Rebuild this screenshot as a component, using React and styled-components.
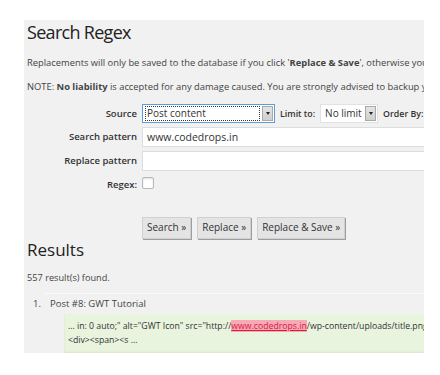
import React from "react";
import styled, { createGlobalStyle } from "styled-components";

const GlobalStyle = createGlobalStyle`
  html, body {
    margin: 0;
    padding: 0;
    background: #fff;
    font-family: "Open Sans", "Liberation Sans", sans-serif;
    color: #333;
  }
`;

const Page = styled.div`
  padding: 20px 16px 0 24px;
`;

const Panel = styled.div`
  width: 400px;
  height: 333px;
  background: #f1f1f1;
  overflow: hidden;
  box-sizing: border-box;
  padding-left: 3px;
  white-space: nowrap;
`;

const Title = styled.h2`
  margin: 0;
  padding-top: 1px;
  font-size: 18px;
  letter-spacing: -0.7px;
  font-weight: 400;
  line-height: 22px;
  color: #222;
`;

const Note = styled.p`
  margin: ${(p) => p.$top}px 0 0;
  font-size: 9.35px;
  line-height: 14px;
  color: #444;
  b {
    font-weight: 700;
  }
`;

const Form = styled.div`
  display: grid;
  grid-template-columns: 110px auto;
  column-gap: 5px;
  row-gap: 4px;
  margin-top: 10px;
`;

const Label = styled.div`
  text-align: right;
  font-size: 9.5px;
  font-weight: 600;
  color: #333;
  line-height: 19px;
`;

const Line = styled.div`
  display: flex;
  align-items: center;
  gap: 5px;
`;

const Inline = styled.span`
  font-size: 8.8px;
  font-weight: 600;
  color: #333;
`;

const Select = styled.div`
  width: ${(p) => p.$w}px;
  height: 19px;
  box-sizing: border-box;
  background: #fff;
  border: 1px solid ${(p) => (p.$focus ? "#5b9dd9" : "#e2e2e2")};
  display: flex;
  align-items: center;
  font-size: 10px;
  color: #333;
  padding-left: 2px;
`;

const Focus = styled.div`
  flex: 1;
  height: 13px;
  line-height: 13px;
  border: 1px dotted #3a3a3a;
  margin-right: 2px;
  padding-left: 1px;
`;

const Plain = styled.div`
  flex: 1;
  line-height: 13px;
  padding-left: 2px;
`;

const Arrow = styled.div`
  width: 11px;
  height: 15px;
  margin-right: 1px;
  background: linear-gradient(#e4e4e4, #cfcfcf);
  border: 1px solid #a9a9a9;
  box-sizing: border-box;
  display: flex;
  align-items: center;
  justify-content: center;
  &::after {
    content: "";
    border-left: 2.5px solid transparent;
    border-right: 2.5px solid transparent;
    border-top: 3px solid #222;
  }
`;

const Input = styled.div`
  width: 300px;
  height: 20px;
  box-sizing: border-box;
  background: #fff;
  border-top: 1px solid #ddd;
  border-bottom: 1px solid #ddd;
  border-left: 1px solid #ddd;
  padding-left: 4px;
  font-size: 10.5px;
  line-height: 18px;
  color: #333;
`;

const Check = styled.div`
  width: 12px;
  height: 12px;
  box-sizing: border-box;
  margin-top: 2px;
  border: 1px solid #b4b9be;
  border-radius: 2px;
  background: #fff;
  box-shadow: inset 0 1px 2px rgba(0, 0, 0, 0.12);
`;

const Buttons = styled.div`
  display: flex;
  gap: 6px;
  margin: 23px 0 0 115px;
`;

const Button = styled.div`
  height: 20px;
  padding: 0 4px;
  background: #e4e4e4;
  border: 1px solid #d0d0d0;
  box-shadow: 1px 1px 0 #9d9d9d;
  font-size: 10px;
  line-height: 19px;
  color: #333;
`;

const Heading = styled.h3`
  margin: 0;
  font-size: 17px;
  font-weight: 400;
  line-height: 22px;
  color: #222;
`;

const Count = styled.p`
  margin: 10px 0 0;
  font-size: 9.2px;
  line-height: 14px;
  color: #444;
`;

const List = styled.ol`
  margin: 8px 0 0;
  padding: 0;
  list-style: none;
  width: 383px;
`;

const Item = styled.li`
  display: grid;
  grid-template-columns: 18px 1fr;
  font-size: 9.5px;
  color: #444;
`;

const Num = styled.span`
  text-align: right;
  padding: 4px 4px 0 0;
  line-height: 14px;
`;

const Body = styled.div`
  border-top: 1px solid #fafafa;
  padding-top: 3px;
`;

const Post = styled.div`
  line-height: 14px;
  padding-left: 5px;
`;

const Match = styled.div`
  margin-top: 3px;
  margin-left: 19px;
  background: #e8f4de;
  padding: 5px 0 9px 4px;
  font-size: 8.7px;
  line-height: 14px;
  color: #333;
  overflow: hidden;
  box-shadow: inset 0 -4px 4px -2px rgba(0, 0, 0, 0.18);
`;

const Hit = styled.span`
  background: #f7a9b6;
  color: #d81b3c;
  text-decoration: underline;
`;

export default function App() {
  return (
    <>
      <GlobalStyle />
      <Page>
        <Panel>
          <Title>Search Regex</Title>
          <Note $top={13}>
            Replacements will only be saved to the database if you click '<b>Replace &amp; Save</b>', otherwise you will get a preview
          </Note>
          <Note $top={10}>
            NOTE: <b>No liability</b> is accepted for any damage caused. You are strongly advised to backup your database
          </Note>

          <Form>
            <Label>Source</Label>
            <Line>
              <Select $w={133} $focus>
                <Focus>Post content</Focus>
                <Arrow />
              </Select>
              <Inline>Limit to:</Inline>
              <Select $w={58}>
                <Plain>No limit</Plain>
                <Arrow />
              </Select>
              <Inline>Order By:</Inline>
            </Line>

            <Label>Search pattern</Label>
            <Input>www.codedrops.in</Input>

            <Label>Replace pattern</Label>
            <Input />

            <Label>Regex:</Label>
            <Check />
          </Form>

          <Buttons>
            <Button>Search »</Button>
            <Button>Replace »</Button>
            <Button>Replace &amp; Save »</Button>
          </Buttons>

          <Heading>Results</Heading>
          <Count>557 result(s) found.</Count>

          <List>
            <Item>
              <Num>1.</Num>
              <Body>
                <Post>Post #8: GWT Tutorial</Post>
                <Match>
                  … in: 0 auto;" alt="GWT Icon" src="http://<Hit>www.codedrops.in</Hit>/wp-content/uploads/title.png
                  <br />
                  &lt;div&gt;&lt;span&gt;&lt;s …
                </Match>
              </Body>
            </Item>
          </List>
        </Panel>
      </Page>
    </>
  );
}
